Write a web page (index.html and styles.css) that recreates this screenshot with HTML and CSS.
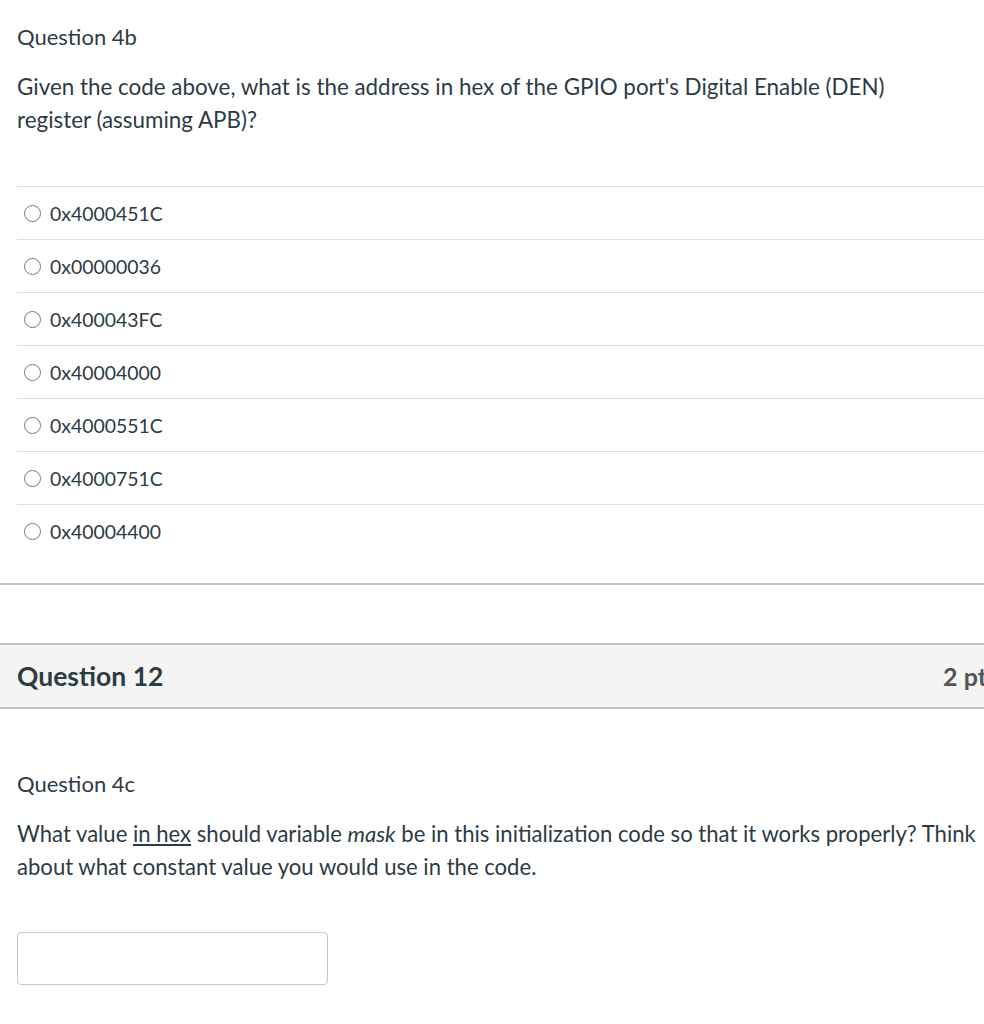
FILE: index.html
```html
<!DOCTYPE html>
<html>
<head>
<meta charset="utf-8">
<link rel="stylesheet" href="styles.css">
</head>
<body>
<div class="page">
  <section class="question">
    <div class="qtext">
      <p class="qtitle">Question 4b</p>
      <p class="qbody narrow">Given the code above, what is the address in hex of the GPIO port's Digital Enable (DEN) register (assuming APB)?</p>
    </div>
    <ul class="answers">
      <li class="answer"><span class="radio"></span><span class="label">0x4000451C</span></li>
      <li class="answer"><span class="radio"></span><span class="label">0x00000036</span></li>
      <li class="answer"><span class="radio"></span><span class="label">0x400043FC</span></li>
      <li class="answer"><span class="radio"></span><span class="label">0x40004000</span></li>
      <li class="answer"><span class="radio"></span><span class="label">0x4000551C</span></li>
      <li class="answer"><span class="radio"></span><span class="label">0x4000751C</span></li>
      <li class="answer"><span class="radio"></span><span class="label">0x40004400</span></li>
    </ul>
  </section>
  <section class="question q12">
    <header class="qheader">
      <h2 class="qname">Question 12</h2>
      <span class="pts">2 pts</span>
    </header>
    <div class="qtext">
      <p class="qtitle">Question 4c</p>
      <p class="qbody wide">What value <u>in hex</u> should variable <em>mask</em> be in this initialization code so that it works properly? Think about what constant value you would use in the code.</p>
    </div>
    <div class="inputwrap"><input class="ans" type="text"></div>
  </section>
</div>
</body>
</html>
```

FILE: styles.css
```css
html, body {
  margin: 0;
  padding: 0;
  background: #fff;
}
body {
  font-family: Lato, "Open Sans", sans-serif;
  color: #2d3b45;
  overflow: hidden;
}
.page {
  width: 984px;
  overflow: hidden;
}
.question {
  display: flex;
  flex-direction: column;
}
.qtext {
  padding: 0 0 0 17px;
}
.qtitle {
  margin: 21px 0 0;
  font-size: 22px;
  line-height: 32px;
}
.qbody {
  margin: 17px 0 0;
  font-size: 22.4px;
  line-height: 33px;
}
.narrow {
  max-width: 920px;
}
.wide {
  width: 967px;
  font-size: 22.1px;
}
.answers {
  list-style: none;
  margin: 50px 0 0 0;
  padding: 0 0 26px;
  border-bottom: 2px solid #c4c4c4;
}
.answer {
  display: flex;
  align-items: center;
  height: 52px;
  border-top: 1px solid #dedede;
  margin-left: 17px;
  gap: 9px;
  padding-left: 7px;
}
.radio {
  width: 17px;
  height: 17px;
  border: 1.5px solid #777;
  border-radius: 50%;
  box-sizing: border-box;
}
.label {
  font-size: 19.4px;
}
.q12 {
  margin-top: 58px;
}
.qheader {
  display: flex;
  justify-content: space-between;
  align-items: center;
  height: 62px;
  background: #f4f4f4;
  border-top: 2px solid #c4c4c4;
  border-bottom: 2px solid #c4c4c4;
  padding: 0 0 0 17px;
  overflow: hidden;
}
.qname {
  margin: 0;
  font-size: 26.5px;
  font-weight: 700;
}
.pts {
  font-size: 25px;
  font-weight: 700;
  color: #555;
  margin-right: -14px;
  white-space: nowrap;
}
.q12 .qtitle {
  margin-top: 59px;
}
.inputwrap {
  padding: 49px 17px 0;
}
.ans {
  display: block;
  width: 311px;
  height: 53px;
  box-sizing: border-box;
  border: 1px solid #c7c7c7;
  border-radius: 4px;
  background: #fff;
}
```
